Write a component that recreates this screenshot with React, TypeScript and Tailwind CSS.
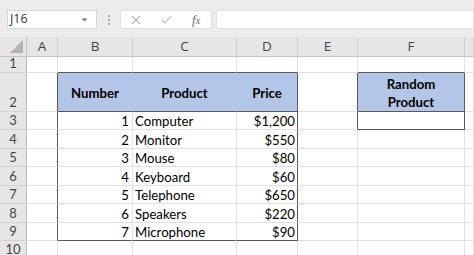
import React from "react";

const cols = ["A", "B", "C", "D", "E", "F", ""];
const grid = "grid grid-cols-[27px_31px_75px_104px_61px_60px_107px_1fr]";

const rows = [
  { n: 1, product: "Computer", price: "$1,200", h: "h-[18px]" },
  { n: 2, product: "Monitor", price: "$550", h: "h-[19px]" },
  { n: 3, product: "Mouse", price: "$80", h: "h-[18px]" },
  { n: 4, product: "Keyboard", price: "$60", h: "h-[19px]" },
  { n: 5, product: "Telephone", price: "$650", h: "h-[18px]" },
  { n: 6, product: "Speakers", price: "$220", h: "h-[19px]" },
  { n: 7, product: "Microphone", price: "$90", h: "h-[18px]" },
];

// base cell: gridlines only, alignment added per cell
const base = "border-r border-b border-[#e1e1e1] flex text-[13.2px] text-black";
const cell = `${base} leading-none items-end pb-[1px]`;
const head = `${base} bg-[#b4c6e7] border-b-[#595959] items-center justify-center font-bold`;
const rowHead =
  "bg-[#e6e6e6] border-r border-b border-r-[#bdbdbd] border-b-[#d2d2d2] flex items-end justify-center pb-[2px] text-[13px] leading-none text-[#444]";

export default function App() {
  return (
    <div className="w-[474px] h-[255px] overflow-hidden bg-white font-['Lato',sans-serif] select-none">
      {/* Formula bar */}
      <div className="h-[37px] bg-[#ececec] flex items-start pt-[10px] font-['Open_Sans',sans-serif]">
        <div className="ml-[7px] w-[90px] h-[19px] bg-white border border-[#d6d6d6] flex items-center justify-between pl-[2px] pr-[8px]">
          <span className="text-[12.5px] text-[#333]">J16</span>
          <svg width="7" height="4" viewBox="0 0 7 4">
            <path d="M0.5 0.5 L3.5 3.5 L6.5 0.5 Z" fill="#777" />
          </svg>
        </div>
        <div className="w-[23px] h-[19px] flex flex-col items-center justify-center gap-[2px]">
          <span className="w-[2px] h-[2px] bg-[#aaa]" />
          <span className="w-[2px] h-[2px] bg-[#aaa]" />
          <span className="w-[2px] h-[2px] bg-[#aaa]" />
        </div>
        <div className="w-[92px] h-[19px] bg-white border border-[#e0e0e0] flex items-center">
          <svg className="ml-[10px]" width="10" height="10" viewBox="0 0 10 10">
            <path d="M1 1 L9 9 M9 1 L1 9" stroke="#b5b5b5" strokeWidth="1.1" />
          </svg>
          <svg className="ml-[20px]" width="11" height="9" viewBox="0 0 11 9">
            <path d="M1 5 L4 8 L10 1" stroke="#b5b5b5" strokeWidth="1.1" fill="none" />
          </svg>
          <span className="ml-[20px] font-['Liberation_Serif',serif] italic text-[13px] text-[#666] leading-none">
            f<span className="text-[10px]">x</span>
          </span>
        </div>
        <div className="ml-[4px] flex-1 h-[19px] bg-white border border-[#e0e0e0]" />
      </div>

      {/* Column headers */}
      <div className={`${grid} h-[20px] bg-[#e6e6e6] border-b border-[#c4c4c4] font-['Open_Sans',sans-serif]`}>
        <div className="border-r border-[#c4c4c4] flex items-end justify-end pr-[3px] pb-[3px]">
          <svg width="13" height="13" viewBox="0 0 13 13">
            <path d="M13 0 L13 13 L0 13 Z" fill="#b3b3b3" />
          </svg>
        </div>
        {cols.map((c, i) => (
          <div
            key={i}
            className="border-r border-[#cfcfcf] flex items-center justify-center text-[13.5px] text-[#444] leading-none"
          >
            {c}
          </div>
        ))}
      </div>

      {/* Row 1 */}
      <div className={`${grid} h-[16px]`}>
        <div className={rowHead}>1</div>
        <div className={cell} />
        <div className={`${cell} border-b-[#595959]`} />
        <div className={`${cell} border-b-[#595959]`} />
        <div className={`${cell} border-b-[#595959]`} />
        <div className={cell} />
        <div className={`${cell} border-b-[#595959]`} />
        <div className={cell} />
      </div>

      {/* Row 2: table headers */}
      <div className={`${grid} h-[39px]`}>
        <div className={rowHead}>2</div>
        <div className={`${cell} border-r-[#595959]`} />
        <div className={`${head} border-r-[#b4c6e7] leading-none pt-[3px]`}>Number</div>
        <div className={`${head} border-r-[#b4c6e7] leading-none pt-[3px]`}>Product</div>
        <div className={`${head} border-r-[#595959] leading-none pt-[3px]`}>Price</div>
        <div className={`${cell} border-r-[#595959]`} />
        <div className={`${head} border-r-[#595959] flex-col pt-[1px]`}>
          <span className="leading-[18px]">Random</span>
          <span className="leading-[18px]">Product</span>
        </div>
        <div className={cell} />
      </div>

      {/* Data rows */}
      {rows.map((r, i) => {
        const last = i === rows.length - 1;
        const bottom = last ? "border-b-[#595959]" : "";
        return (
          <div key={r.n} className={`${grid} ${r.h}`}>
            <div className={rowHead}>{i + 3}</div>
            <div className={`${cell} border-r-[#595959]`} />
            <div className={`${cell} ${bottom} justify-end pr-[3px]`}>{r.n}</div>
            <div className={`${cell} ${bottom} pl-[2px]`}>{r.product}</div>
            <div className={`${cell} ${bottom} border-r-[#595959] justify-end pr-[2px]`}>{r.price}</div>
            <div className={`${cell} ${i === 0 ? "border-r-[#595959]" : ""}`} />
            <div className={`${cell} ${i === 0 ? "border-r-[#595959] border-b-[#595959]" : ""}`} />
            <div className={cell} />
          </div>
        );
      })}

      {/* Row 10 */}
      <div className={`${grid} h-[18px]`}>
        <div className={rowHead}>10</div>
        <div className={cell} />
        <div className={cell} />
        <div className={cell} />
        <div className={cell} />
        <div className={cell} />
        <div className={cell} />
        <div className={cell} />
      </div>
    </div>
  );
}
